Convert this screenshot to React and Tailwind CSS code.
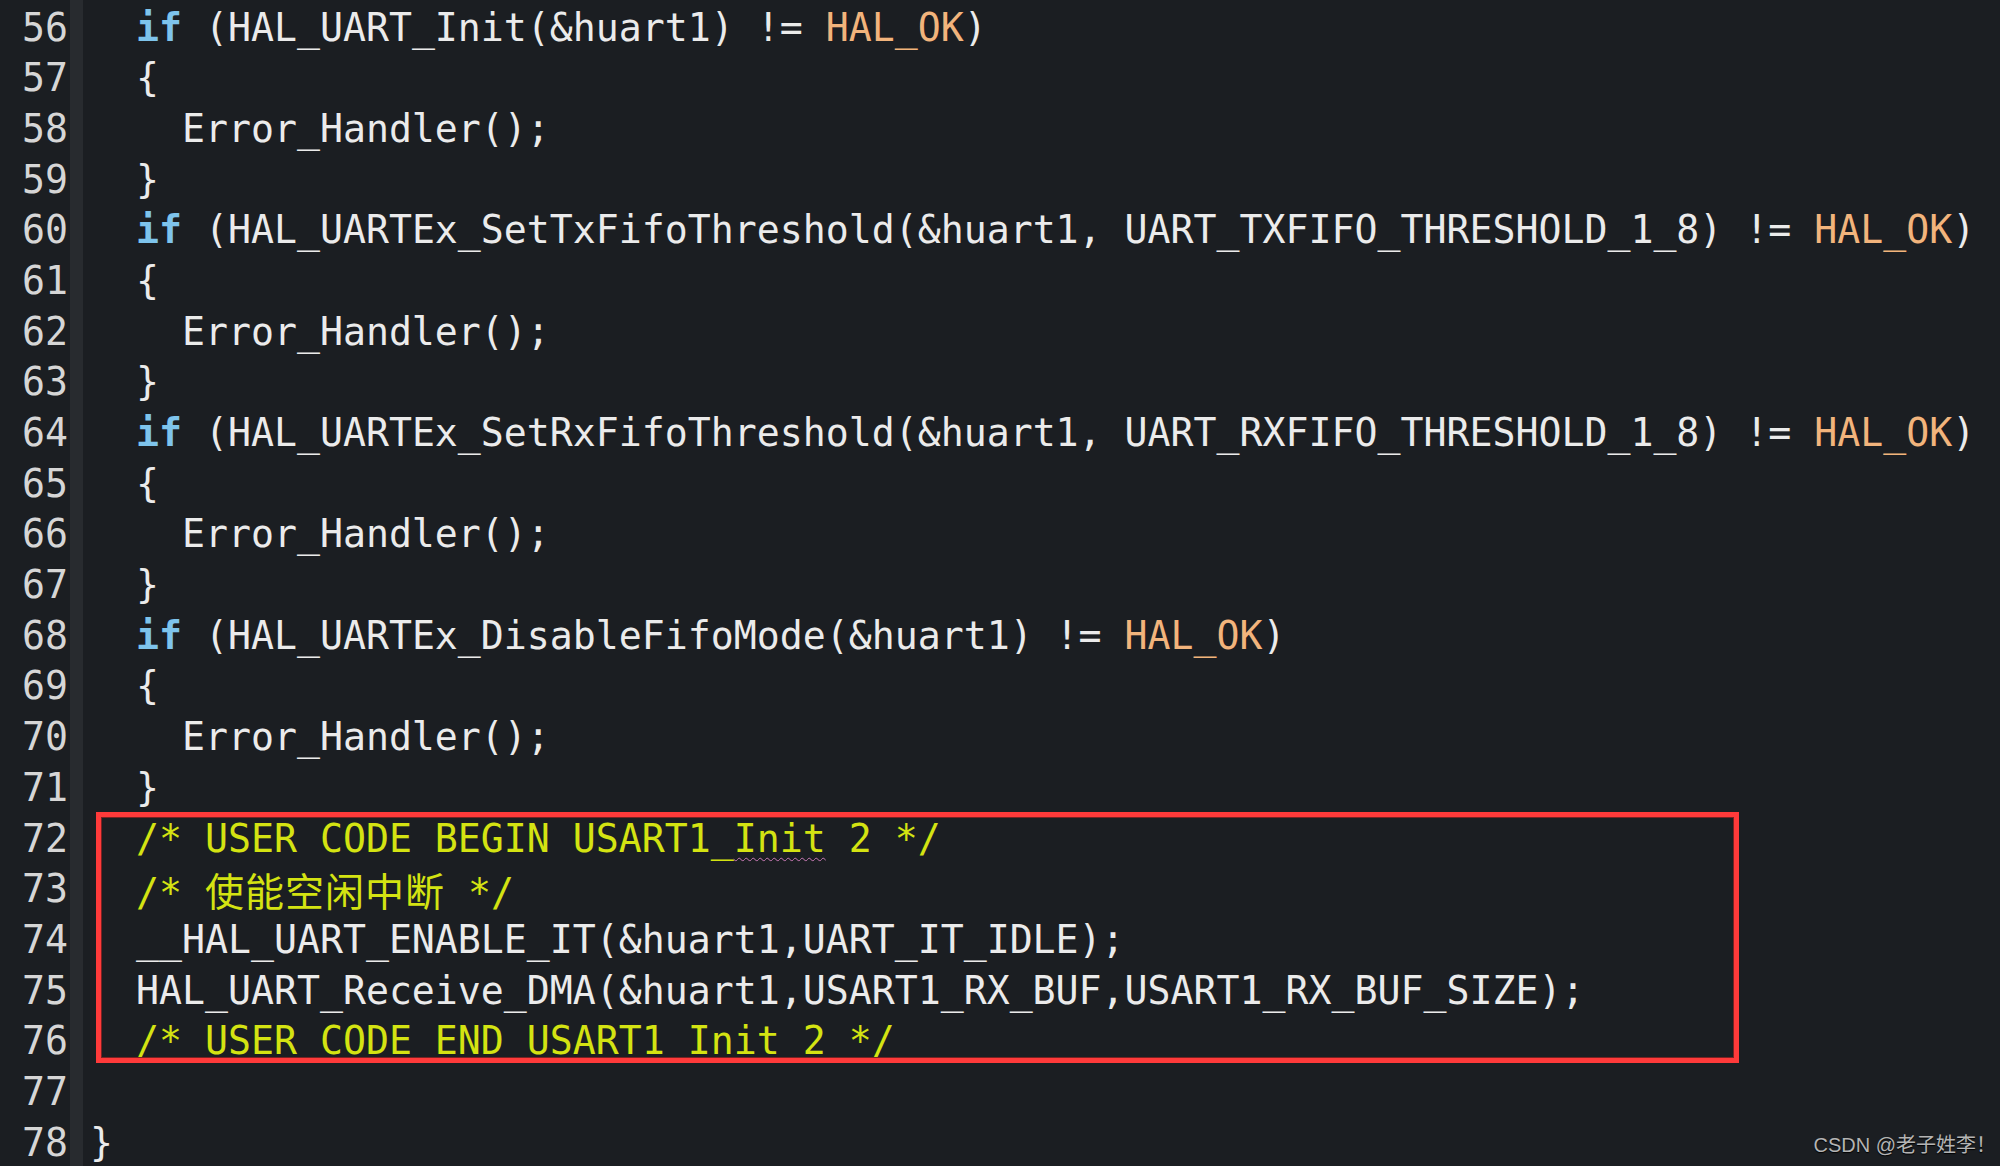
import React from "react";

const K = "font-bold text-[#7ec4ec]";
const OK = "text-[#f2b47c]";
const C = "text-[#d4e312]";

const lines = [
  [["  "], ["if", K], [" (HAL_UART_Init(&huart1) != "], ["HAL_OK", OK], [")"]],
  [["  {"]],
  [["    Error_Handler();"]],
  [["  }"]],
  [["  "], ["if", K], [" (HAL_UARTEx_SetTxFifoThreshold(&huart1, UART_TXFIFO_THRESHOLD_1_8) != "], ["HAL_OK", OK], [")"]],
  [["  {"]],
  [["    Error_Handler();"]],
  [["  }"]],
  [["  "], ["if", K], [" (HAL_UARTEx_SetRxFifoThreshold(&huart1, UART_RXFIFO_THRESHOLD_1_8) != "], ["HAL_OK", OK], [")"]],
  [["  {"]],
  [["    Error_Handler();"]],
  [["  }"]],
  [["  "], ["if", K], [" (HAL_UARTEx_DisableFifoMode(&huart1) != "], ["HAL_OK", OK], [")"]],
  [["  {"]],
  [["    Error_Handler();"]],
  [["  }"]],
];

const boxed = [
  [["  "], ["/* USER CODE BEGIN USART1_", C], ["Init", C + " underline decoration-wavy decoration-[#c97ab6] decoration-1 underline-offset-[5px]"], [" 2 */", C]],
  [["  "], ["/* ", C], ["使能空闲中断", C + " text-[39px] font-['Noto_Sans_CJK_SC',sans-serif] tracking-[1px]"], [" */", C]],
  [["  __HAL_UART_ENABLE_IT(&huart1,UART_IT_IDLE);"]],
  [["  HAL_UART_Receive_DMA(&huart1,USART1_RX_BUF,USART1_RX_BUF_SIZE);"]],
  [["  "], ["/* USER CODE END USART1_Init 2 */", C]],
];

const tail = [[[""]], [["}"]]];

function Row({ segs }) {
  return (
    <div className="h-[50.7px] pt-[4.5px] leading-[46.2px] whitespace-pre">
      {segs.map((s, i) => (
        <span key={i} className={s[1] || ""}>
          {s[0]}
        </span>
      ))}
    </div>
  );
}

export default function App() {
  const nums = [];
  for (let i = 56; i <= 78; i++) nums.push(i);
  return (
    <div className="relative w-[2000px] h-[1166px] overflow-hidden bg-[#1b1e22] font-['DejaVu_Sans_Mono','Liberation_Mono',monospace] text-[38.2px] text-[#ebebeb]">
      <div className="flex h-full">
        <div className="w-[70px] pr-[2px] text-right text-[#d6d6d6]">
          {nums.map((n) => (
            <div key={n} className="h-[50.7px] pt-[4.5px] leading-[46.2px]">
              {n}
            </div>
          ))}
        </div>
        <div className="w-[13px] h-full bg-[#282b2f]" />
        <div className="pl-[7px] flex-1">
          {lines.map((l, i) => (
            <Row key={"a" + i} segs={l} />
          ))}
          <div className="relative">
            {boxed.map((l, i) => (
              <Row key={"b" + i} segs={l} />
            ))}
            <div className="absolute left-[6px] top-[1px] w-[1643px] h-[251px] border-[5px] border-[#ff3a3a] shadow-[inset_0_0_0_1px_#7a2222]" />
          </div>
          {tail.map((l, i) => (
            <Row key={"c" + i} segs={l} />
          ))}
        </div>
      </div>
      <div className="absolute right-[4px] bottom-[11px] text-[20px] leading-none text-[#b4b4b4] font-['Liberation_Sans','Noto_Sans_CJK_SC',sans-serif] [text-shadow:0_1px_1px_#000]">
        CSDN @老子姓李！
      </div>
    </div>
  );
}
